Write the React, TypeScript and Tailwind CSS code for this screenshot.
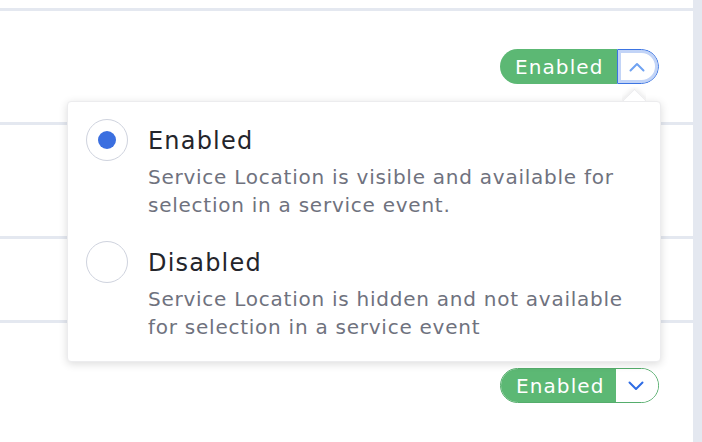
import React from "react";

function ChevronUp({ color }: { color: string }) {
  return (
    <svg width="16" height="10" viewBox="0 0 16 10" fill="none">
      <path d="M1.5 8.5 L8 2 L14.5 8.5" stroke={color} strokeWidth="2" strokeLinecap="round" strokeLinejoin="round" />
    </svg>
  );
}

function ChevronDown({ color }: { color: string }) {
  return (
    <svg width="16" height="10" viewBox="0 0 16 10" fill="none">
      <path d="M1.5 1.5 L8 8 L14.5 1.5" stroke={color} strokeWidth="2" strokeLinecap="round" strokeLinejoin="round" />
    </svg>
  );
}

function Pill({ open }: { open: boolean }) {
  return (
    <div
      className={
        "flex h-[35px] w-[159px] rounded-full overflow-hidden " +
        (open ? "" : "border border-[#55ad6c]")
      }
    >
      <div className="flex-1 bg-[#5cb874] text-white text-[20px] tracking-[1.1px] flex items-center pl-[15px]">
        Enabled
      </div>
      {open ? (
        <div className="w-[42px] bg-white border border-[#3b74e2] rounded-r-full shadow-[inset_0_0_0_3px_#c2d4f7] flex items-center justify-center pr-[2px]">
          <ChevronUp color="#6fa2f2" />
        </div>
      ) : (
        <div className="w-[42px] bg-white flex items-center justify-center pr-[2px]">
          <ChevronDown color="#2f6ce4" />
        </div>
      )}
    </div>
  );
}

function Option({
  selected,
  title,
  desc,
  className,
}: {
  selected: boolean;
  title: string;
  desc: string;
  className?: string;
}) {
  return (
    <div className={"flex gap-[20px] " + (className ?? "")}>
      <div className="w-[42px] h-[42px] shrink-0 rounded-full border border-[#cfd3de] flex items-center justify-center">
        {selected && <div className="w-[18px] h-[18px] rounded-full bg-[#3b6fe0]" />}
      </div>
      <div className="flex-1">
        <div className="h-[42px] leading-[42px] pt-[1px] text-[24px] tracking-[1.2px] text-[#24252b]">{title}</div>
        <div className="mt-[2px] text-[20px] leading-[28px] tracking-[0.75px] text-[#6f727e]">{desc}</div>
      </div>
    </div>
  );
}

export default function App() {
  return (
    <div
      className="relative w-[702px] h-[442px] overflow-hidden bg-[#e4e8f0]"
      style={{ fontFamily: '"DejaVu Sans", "Liberation Sans", sans-serif' }}
    >
      <div className="flex flex-col gap-[3px] pr-[9px] h-full">
        <div className="h-[8px] bg-white" />
        <div className="h-[111px] bg-white flex items-center justify-end pr-[34px]">
          <Pill open />
        </div>
        <div className="h-[111px] bg-white" />
        <div className="h-[81px] bg-white" />
        <div className="flex-1 bg-white flex justify-end items-start pr-[34px] pt-[45px]">
          <Pill open={false} />
        </div>
      </div>

      <div className="absolute left-[67px] top-[101px] w-[594px] h-[261px] bg-white rounded-[4px] border border-[#ececee] shadow-[0_2px_8px_rgba(0,0,0,0.14)] pt-[17px] pl-[18px] pr-[18px]">
        <Option
          selected
          title="Enabled"
          desc="Service Location is visible and available for selection in a service event."
        />
        <Option
          selected={false}
          className="mt-[22px]"
          title="Disabled"
          desc="Service Location is hidden and not available for selection in a service event"
        />
      </div>

      <div className="absolute left-[622px] top-[87px] w-[24px] h-[14px] overflow-hidden">
        <div className="absolute left-[3.5px] top-[4.5px] w-[17px] h-[17px] rotate-45 bg-white border border-[#ececee] shadow-[0_0_6px_rgba(0,0,0,0.12)]" />
      </div>
    </div>
  );
}
